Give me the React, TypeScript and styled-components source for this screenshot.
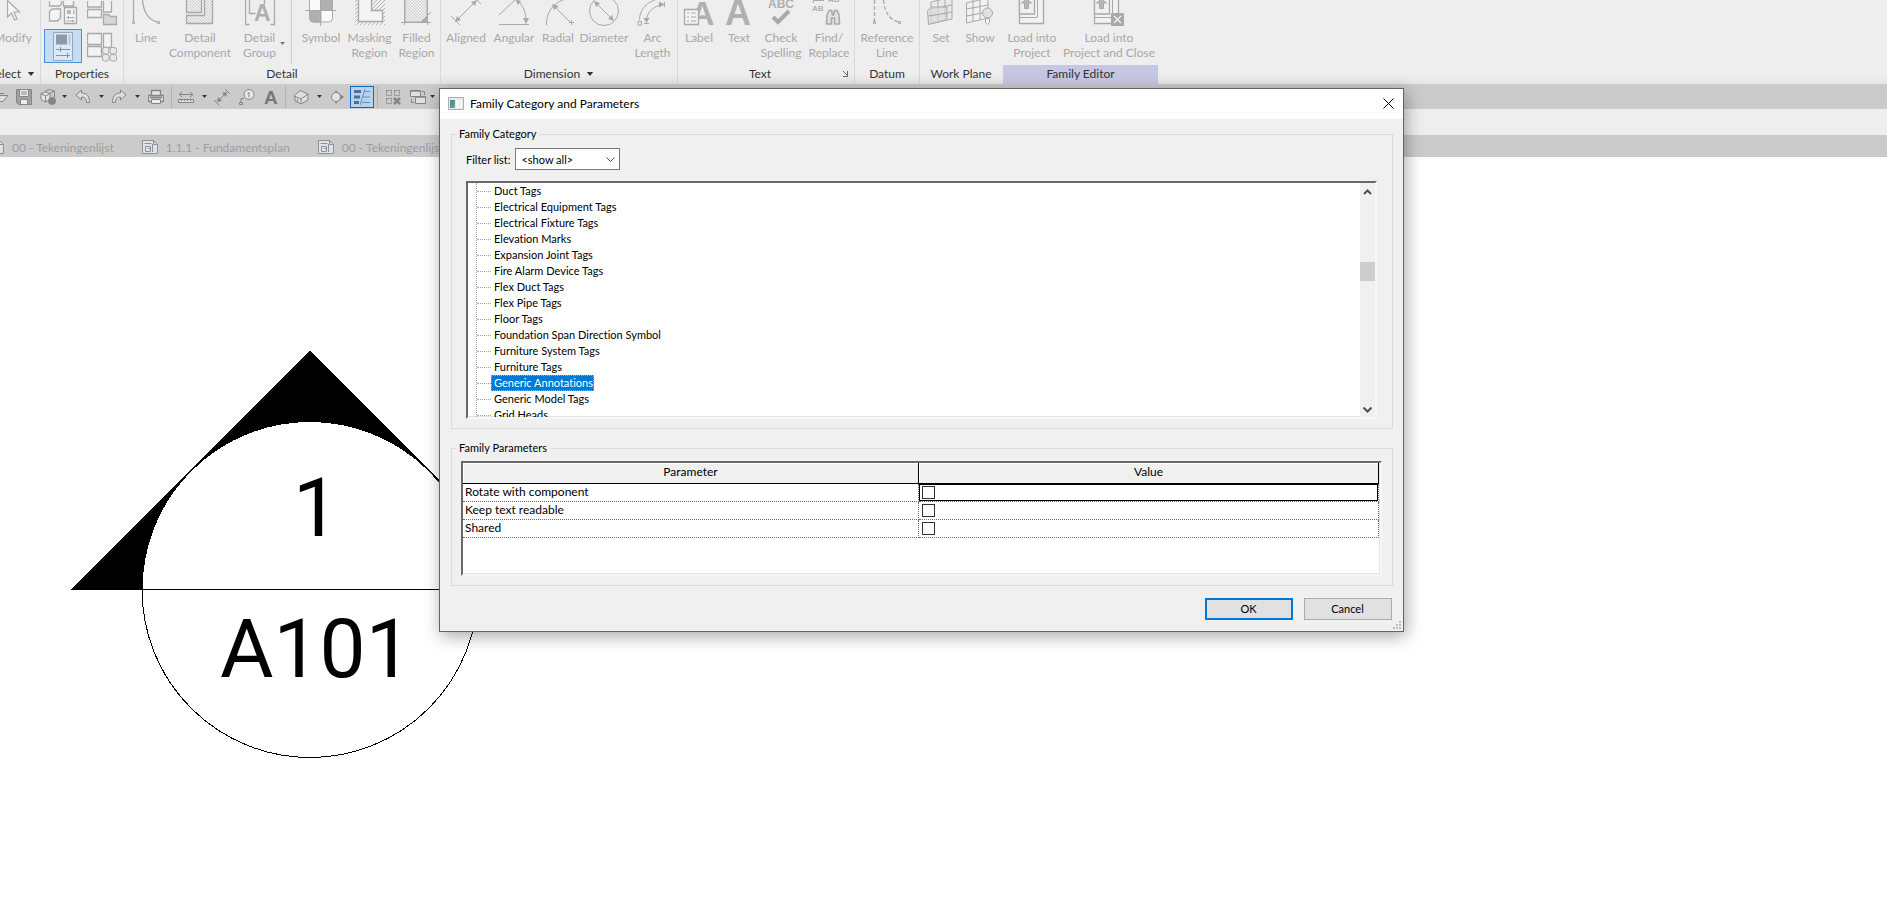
import React, { ReactNode } from 'react';
import styled, { createGlobalStyle, css } from 'styled-components';

const ui = '"Lato", "Liberation Sans", sans-serif';
const line = '#a9a9a9';
const dark = '#858585';

const GlobalStyle = createGlobalStyle`
  *, *::before, *::after { box-sizing: border-box; }
  html, body { margin: 0; padding: 0; }
  body { font-family: ${ui}; font-size: 12px; font-variant-ligatures: none; background: #fff; overflow: hidden; }
  button, select, input { font: inherit; color: inherit; margin: 0; }
  svg { display: block; flex: none; }
`;

const Page = styled.div`
  position: relative;
  min-height: 100vh;
  display: flex;
  flex-direction: column;
`;

/* ---------- ribbon ---------- */

const Ribbon = styled.header`
  display: flex;
  background: linear-gradient(#eee 75px, #e6e6e6);
`;

const Panel = styled.section<{ $width: number; $last?: boolean }>`
  width: ${p => p.$width}px;
  flex: none;
  display: flex;
  flex-direction: column;
  overflow: hidden;
  border-right: 1px solid ${p => (p.$last ? 'transparent' : '#d9d9d9')};
`;

const Tools = styled.div<{ $end?: boolean }>`
  display: flex;
  height: 65px;
  justify-content: ${p => (p.$end ? 'flex-end' : 'flex-start')};
`;

const PanelTitle = styled.h2<{ $accent?: boolean; $end?: boolean }>`
  margin: 0;
  padding: 0 ${p => (p.$end ? 5 : 0)}px 2px;
  height: 19px;
  line-height: 16px;
  font-size: 12px;
  font-weight: 400;
  white-space: nowrap;
  color: #333;
  display: flex;
  align-items: center;
  justify-content: ${p => (p.$end ? 'flex-end' : 'center')};
  gap: 6px;
  ${p => p.$accent && css`background: #c6c7e3;`}
`;

const TitleText = styled.span<{ $grow?: boolean }>`
  ${p => p.$grow && css`flex: 1; text-align: center; padding-left: 6px;`}
`;

const PlainButton = styled.button`
  border: 0;
  padding: 0;
  background: none;
  display: flex;
  align-items: center;
  justify-content: center;
`;

const ToolButton = styled(PlainButton)<{ $width: number }>`
  width: ${p => p.$width}px;
  flex: none;
  flex-direction: column;
  justify-content: flex-start;
  color: #a8a8a8;
  line-height: 15px;
`;

const ToolLabel = styled.span`
  display: flex;
  align-items: flex-end;
  gap: 4px;
  white-space: pre;
  text-align: center;
`;

const DropSlot = styled.span`
  width: 0;
  height: 18px;
`;

const RibbonRule = styled.span`
  width: 1px;
  height: 64px;
  margin-right: 6px;
  background: #cdcdcd;
`;

const PropertyGrid = styled.div`
  display: grid;
  grid-template-columns: 38px 40px;
  grid-template-rows: 29px 34px;
  padding-left: 3px;
`;

const PropertyButton = styled(PlainButton)<{ $active?: boolean }>`
  border: 1px solid ${p => (p.$active ? '#4a90d9' : 'transparent')};
  background: ${p => (p.$active ? '#c5dcf2' : 'none')};
`;

/* ---------- quick access ---------- */

const QuickBar = styled.nav`
  display: flex;
  align-items: center;
  height: 25px;
  background: #cbcbcb;
`;

const QuickButton = styled(PlainButton)<{ $width: number; $active?: boolean }>`
  width: ${p => p.$width}px;
  height: 22px;
  flex: none;
  overflow: hidden;
  ${p => p.$active && css`border: 1px solid #1467c0; background: #b5d3f0; margin-right: 3px;`}
`;

const QuickRule = styled.span`
  width: 1px;
  height: 22px;
  background: #b3b3b3;
`;

const OptionsBar = styled.div`
  height: 26px;
  background: #eee;
`;

const TabBar = styled.nav`
  display: flex;
  align-items: center;
  height: 22px;
  padding-top: 2px;
  gap: 28px;
  background: #cbcbcb;
  overflow: hidden;
`;

const Tab = styled.a<{ $cut?: boolean }>`
  display: flex;
  align-items: center;
  gap: 8px;
  margin-left: ${p => (p.$cut ? -12 : 0)}px;
  color: #9d9d9d;
  text-decoration: none;
  white-space: nowrap;
`;

const Canvas = styled.main`
  flex: 1;
  padding: 193px 0 0 70px;
  background: #fff;
`;

/* ---------- dialog ---------- */

const Dialog = styled.div`
  position: absolute;
  left: 439px;
  top: 88px;
  width: 965px;
  border: 1px solid #646464;
  background: #f0f0f0;
  color: #000;
  font-size: 11px;
  box-shadow: 2px 4px 16px rgba(0, 0, 0, 0.35);
`;

const TitleBar = styled.div`
  display: flex;
  align-items: center;
  height: 30px;
  padding: 0 9px 2px 8px;
  gap: 6px;
  background: #fff;
  font-size: 12px;
`;

const DialogTitle = styled.h1`
  flex: 1;
  margin: 0;
  font-size: 12px;
  font-weight: 400;
`;

const DialogBody = styled.form`
  display: flex;
  flex-direction: column;
  gap: 12px;
  padding: 8px 10px 11px 11px;
`;

const Group = styled.fieldset<{ $pad: string }>`
  min-width: 0;
  margin: 0;
  padding: ${p => p.$pad};
  border: 1px solid #dcdcdc;
`;

const Legend = styled.legend<{ $indent: number }>`
  margin-left: -${p => p.$indent}px;
  padding: 0 3px 0 2px;
  line-height: 14px;
`;

const FilterRow = styled.div`
  display: flex;
  align-items: center;
  gap: 5px;
  margin-bottom: 11px;
`;

const SelectBox = styled.span`
  position: relative;
  width: 105px;
`;

const Select = styled.select`
  display: block;
  width: 100%;
  height: 22px;
  padding: 0 5px;
  appearance: none;
  border: 1px solid #7a7a7a;
  border-radius: 0;
  background: #fff;
`;

const SelectArrow = styled.span`
  position: absolute;
  right: 5px;
  top: 9px;
  pointer-events: none;
`;

const Sunken = styled.div`
  border: 2px solid;
  border-color: #696969 #f7f7f7 #f7f7f7 #696969;
  background: #fff;
  box-shadow: inset -1px -1px 0 #e3e3e3;
`;

const ListBox = styled(Sunken)`
  display: flex;
  height: 238px;
`;

const Tree = styled.ul`
  flex: 1;
  margin: 0 0 0 8px;
  padding: 0;
  list-style: none;
  overflow: hidden;
  border-left: 1px dotted #a0a0a0;
`;

const TreeItem = styled.li`
  display: flex;
  align-items: center;
  height: 16px;
  &::before {
    content: '';
    width: 14px;
    border-top: 1px dotted #a0a0a0;
  }
`;

const TreeLabel = styled.span<{ $selected?: boolean }>`
  height: 16px;
  line-height: 14px;
  padding-left: 2px;
  border: 1px dotted ${p => (p.$selected ? '#ff9a3c' : 'transparent')};
  ${p => p.$selected && css`background: #0078d7; color: #fff;`}
`;

const ScrollBar = styled.div`
  display: flex;
  flex-direction: column;
  width: 15px;
  background: #f0f0f0;
`;

const ScrollButton = styled(PlainButton)`
  height: 18px;
  &:last-child { height: 14px; }
`;

const Track = styled.div`
  flex: 1;
  padding-top: 61px;
`;

const Thumb = styled.div`
  height: 19px;
  background: #cdcdcd;
`;

const TableFrame = styled(Sunken)`
  height: 115px;
  padding-right: 1px;
`;

const Table = styled.table`
  width: 100%;
  border-spacing: 0;
  table-layout: fixed;
  font-size: 12px;
`;

const HeadCell = styled.th<{ $width?: number }>`
  ${p => p.$width && css`width: ${p.$width}px;`}
  height: 21px;
  padding: 0 0 2px;
  line-height: 16px;
  font-weight: 400;
  background: #f0f0f0;
  border-right: 1px solid #000;
  border-bottom: 1px solid #000;
  box-shadow: inset 1px 1px 0 #fff;
`;

const Cell = styled.td<{ $focus?: boolean }>`
  height: 18px;
  padding: 0 2px 2px;
  line-height: 15px;
  vertical-align: top;
  border-right: 1px dotted #6b6b6b;
  border-bottom: 1px dotted #6b6b6b;
  ${p => p.$focus && css`box-shadow: inset 0 0 0 1px #000;`}
`;

const CheckBox = styled.input`
  display: block;
  appearance: none;
  width: 13px;
  height: 13px;
  margin: 2px 0 0 1px;
  border: 1px solid #333;
  background: #fff;
`;

const Footer = styled.div`
  display: flex;
  justify-content: flex-end;
  gap: 11px;
  padding-right: 1px;
`;

const PushButton = styled.button<{ $primary?: boolean }>`
  width: 88px;
  height: 22px;
  padding: 0 1px 2px 0;
  border: ${p => (p.$primary ? '2px solid #0078d7' : '1px solid #adadad')};
  background: #e1e1e1;
`;

const Grip = styled.span`
  position: absolute;
  right: 2px;
  bottom: 2px;
`;

/* ---------- drawings ---------- */

const Glyph = ({ children, w = 34, h = 30, stroke = line }: { children: ReactNode; w?: number; h?: number; stroke?: string }) => (
  <svg width={w} height={h} viewBox={`0 0 ${w} ${h}`} fill="none" stroke={stroke} aria-hidden="true">{children}</svg>
);

const Small = ({ children, w = 16 }: { children: ReactNode; w?: number }) => (
  <Glyph w={w} h={16} stroke={dark}>{children}</Glyph>
);

const Caret = ({ color = '#333', w = 5 }: { color?: string; w?: number }) => (
  <svg width={w} height={w === 5 ? 3 : 4} viewBox="0 0 8 5" aria-hidden="true"><path d="M0 0h8L4 5z" fill={color} /></svg>
);

const Hatch = () => (
  <defs>
    <pattern id="hatch" width="3" height="3" patternUnits="userSpaceOnUse"><path d="M0 0l3 3" stroke="#bbb" strokeWidth=".7" /></pattern>
    <pattern id="hatchBack" width="4" height="4" patternUnits="userSpaceOnUse"><path d="M0 4l4-4M-1 1l2-2M3 5l2-2" stroke="#b0b0b0" strokeWidth=".9" /></pattern>
  </defs>
);

const boldA = { fontFamily: '"Liberation Sans", sans-serif', fontWeight: 700, stroke: 'none', fill: '#b0b0b0' };

const icons: Record<string, ReactNode> = {
  modify: <Glyph><path d="M11.5.5V17l4-4 3 7 2.5-1-3-7h5.500z" fill="#f6f6f6" strokeWidth="1.2" /></Glyph>,
  line: <Glyph><path d="M4.500 0v21M13.500 0c1 12 6 20 15 22" strokeWidth="1.3" /><path d="M3.500 21.500h2v2h-2zM28.500 21.500h2v2h-2z" fill="#eee" /></Glyph>,
  component: <Glyph><Hatch /><path d="M3.500-4h15v16.500h-15z" fill="url(#hatch)" strokeWidth="1.3" /><path d="M21.500-2v17.500h-18v8h26V-2" fill="url(#hatch)" strokeWidth="1.3" /></Glyph>,
  group: <Glyph><path d="M.5 0v24.500h4M29.500 0v24.500h-4M19.500 0v4M4.500 0v13.500h6" strokeWidth="1.3" /><text x="9" y="21" fontSize="23" {...boldA}>A</text></Glyph>,
  symbol: <Glyph><path d="M5.500-2h23v20a4 4 0 0 1-4 4h-15a4 4 0 0 1-4-4z" fill="#fafafa" /><path d="M5.500 10.500H17V22H9.500a4 4 0 0 1-4-4zM17-2h11.500v12.500H17z" fill="#b0b0b0" /><path d="M1 10.500h31M16.500-2v28" /></Glyph>,
  mask: <Glyph><path d="M2 0h30v25H2z" fill="url(#hatchBack)" stroke="none" /><path d="M5.500-2h13v12.500h11v11h-24z" fill="#f4f4f4" strokeWidth="1.3" /></Glyph>,
  filled: <Glyph><path d="M5-2h22v18l-6 6H5z" fill="url(#hatch)" /><path d="M4.500-2v27M27.500-2v27M1 22.500h30M20 23L31 12" /><path d="M21 22l6-6v6z" fill="#b0b0b0" /></Glyph>,
  aligned: <Glyph><path d="M7 21L27 1M2 16l9 9M23-5l9 9" /><path d="M6 22l2-6 4 4zM28 0l-2 6-4-4z" fill={line} stroke="none" /></Glyph>,
  angular: <Glyph><path d="M2 15L18 0M2 24.500h30M20 0c6 5 9 12 9 21" /><path d="M26 18h6l-3 6zM18-1l6 2-3 4z" fill={line} stroke="none" /></Glyph>,
  radial: <Glyph><path d="M5.500 25C5 13 12 3 22 0M12 5l19 19M28 22.500h5M30.500 20v5" /><path d="M11 4l7 2-5 4z" fill={line} stroke="none" /></Glyph>,
  diameter: <Glyph><circle cx="17" cy="11" r="14.500" /><path d="M8 2l18 18" /><path d="M7 1l6 2-4 4zM27 21l-6-2 4-4z" fill={line} stroke="none" /></Glyph>,
  arc: <Glyph><path d="M3.500 20C3.500 10 10 3 19 0M10.500 21c0-9 7-15.500 18-16.500M8 23.500h5M28.500 2v5" /><path d="M23 1.500l6 3-6 3zM7.500 18h6l-3 5z" fill={line} stroke="none" /><path d="M2 21.500h3.500v3.500H2z" fill="#eee" /></Glyph>,
  label: <Glyph><text x="8" y="25" fontSize="34" {...boldA}>A</text><path d="M2.500 9.500h14v15h-14z" fill="#f2f2f2" strokeWidth="1.3" /><path d="M5 13h2M5 17h2M5 21h2M9 13h5M9 17h5M9 21h5" /></Glyph>,
  text: <Glyph><text x="3" y="25" fontSize="36" {...boldA}>A</text></Glyph>,
  check: <Glyph><text x="4" y="8" fontSize="12" {...boldA}>ABC</text><path d="M9 17l5 5L25 11" strokeWidth="4" /></Glyph>,
  find: <Glyph><text x="0" y="11" fontSize="8" {...boldA}>AB</text><text x="16" y="2" fontSize="8" {...boldA}>AB</text><path d="M1.500 3V.5H12" /><path d="M15 15l2-4.500h2.500l1 4.500h1l1-4.500H25l2 4.500.5 9h-5v-6h-3v6h-5z" fill="#e2e2e2" strokeWidth="1.6" /></Glyph>,
  reference: <Glyph><path d="M4.500 0v21M13.500 0c1 12 6 20 15 22" strokeWidth="1.3" strokeDasharray="4 2" /><path d="M3.500 21.500h2v2h-2zM28.500 21.500h2v2h-2z" fill="#eee" /></Glyph>,
  set: <Glyph><path d="M7 2L28-3v22L7 23z" fill="#e9e9e9" /><path d="M14 0v21M21-2v22M7 9l21-4M7 16l21-4" /><path d="M3.500 10.500L8 7h15v13L4.500 24.500z" fill="#dcdcdc" fillOpacity=".7" /><path d="M4 16l19-3" /></Glyph>,
  show: <Glyph><path d="M3.500 3L25-2v20L3.500 23z" fill="#f2f2f2" /><path d="M10 0v22M17-1v21M3.500 9L25 5M3.500 16L25 12" /><circle cx="24.500" cy="13" r="5" fill="#e0e0e0" /><path d="M22.500 18.500h4v4l-2 2-2-2z" fill="#f4f4f4" /></Glyph>,
  load: <Glyph><path d="M4.500-2h24v25.500h-24z" fill="#f2f2f2" strokeWidth="1.3" /><path d="M4.500 17.500h18V0" /><path d="M4.500-2h15v16h-15z" fill="#f0f0f0" strokeWidth="1.3" /><path d="M9.500 8.500V3h-3l5-4 5 4h-3v5.500z" fill="#b8b8b8" /></Glyph>,
  loadClose: <Glyph><path d="M2.500-2h24v25.500h-24z" fill="#f2f2f2" strokeWidth="1.3" /><path d="M2.500 17.500h18V0" /><path d="M2.500-2h15v16h-15z" fill="#f0f0f0" strokeWidth="1.3" /><path d="M7.500 8.500V3h-3l5-4 5 4h-3v5.500z" fill="#b8b8b8" /><path d="M19.500 13.500h12v12h-12z" fill="#a8a8a8" /><path d="M22 16l7 7M29 16l-7 7" stroke="#f4f4f4" strokeWidth="1.3" /></Glyph>,
};

const FamilyTypes = () => (
  <Glyph w={30} h={27}>
    <path d="M1.500-2h12v5l-2 2h-10zM15.500-2h10v7h-10zM1.500 10l3-2h8v9l-3 3h-8z" fill="#f4f4f4" strokeWidth="1.3" />
    <path d="M16.500 6.500h12v16h-12z" fill="#f4f4f4" strokeWidth="1.3" />
    <path d="M19 9h4v4h-4zM25 9h1.500v4H25z" fill="#b5b5b5" stroke="none" /><path d="M18.500 16.500h8M18.500 20h8M20.500 15v3M24.500 18.500v3" />
  </Glyph>
);

const FamilyCategory = () => (
  <Glyph w={30} h={27}>
    <path d="M.5-2h14v8H.5zM16.500-2h8v13h-8zM.5 8.500h14v8H.5z" fill="#f2f2f2" strokeWidth="1.3" />
    <path d="M16.500 23.500v-10h5l2 2h6v8z" fill="#d6d6d6" strokeWidth="1.3" />
  </Glyph>
);

const PropertiesIcon = () => (
  <Glyph w={22} h={31} stroke="#8fa9c2">
    <path d="M1.500 1.500h19v28h-19z" fill="#dce8f3" />
    <path d="M4 3.500h11v10H4z" fill="#8b9aa8" stroke="none" /><path d="M16.500 3.500h2v10h-2z" fill="#b9c6d2" stroke="none" />
    <path d="M4 18.500h14M4 24.500h14M8.500 16v5M15.500 22v5" stroke="#7f95aa" />
  </Glyph>
);

const TypesGrid = () => (
  <Glyph w={30} h={31}>
    <path d="M.5 2.500h14v11H.5zM16.500 2.500h8v14h-8zM.5 15.500h14v10H.5z" fill="#f2f2f2" strokeWidth="1.3" />
    <rect x="15.500" y="16.500" width="6.500" height="6.500" rx="2" fill="#e8e8e8" /><rect x="23" y="16.500" width="6.500" height="6.500" rx="2" fill="#e8e8e8" />
    <rect x="15.500" y="23.500" width="6.500" height="6.500" rx="2" fill="#e8e8e8" /><rect x="23" y="23.500" width="6.500" height="6.500" rx="2" fill="#e8e8e8" />
  </Glyph>
);

const SheetIcon = () => (
  <Glyph w={16} h={14} stroke="#8b9299">
    <path d="M.5.5h11l4 4v9H.5z" fill="#dfe2e5" /><path d="M11.500.5v4h4M2.500 3.500h7M3.500 11.500v-5h5v5zM6 8.500h2.500" /><path d="M10.500 4v8" />
  </Glyph>
);

type ToolSpec = { icon: string; label: string; w: number; drop?: boolean; rule?: boolean };
type PanelSpec = { title: string; w: number; tools: ToolSpec[]; drop?: boolean; launcher?: boolean; accent?: boolean; last?: boolean; cut?: boolean };

const selectPanel: PanelSpec = { title: 'Select', w: 41, cut: true, drop: true, tools: [{ icon: 'modify', label: 'Modify', w: 54 }] };

const panels: PanelSpec[] = [
  { title: 'Detail', w: 317, tools: [
    { icon: 'line', label: 'Line', w: 44 },
    { icon: 'component', label: 'Detail\nComponent', w: 64 },
    { icon: 'group', label: 'Detail\nGroup', w: 59, drop: true, rule: true },
    { icon: 'symbol', label: 'Symbol', w: 46 },
    { icon: 'mask', label: 'Masking\nRegion', w: 51 },
    { icon: 'filled', label: 'Filled\nRegion', w: 43 },
  ] },
  { title: 'Dimension', w: 237, drop: true, tools: [
    { icon: 'aligned', label: 'Aligned', w: 50 },
    { icon: 'angular', label: 'Angular', w: 46 },
    { icon: 'radial', label: 'Radial', w: 42 },
    { icon: 'diameter', label: 'Diameter', w: 50 },
    { icon: 'arc', label: 'Arc\nLength', w: 47 },
  ] },
  { title: 'Text', w: 177, launcher: true, tools: [
    { icon: 'label', label: 'Label', w: 42 },
    { icon: 'text', label: 'Text', w: 38 },
    { icon: 'check', label: 'Check\nSpelling', w: 46 },
    { icon: 'find', label: 'Find/\nReplace', w: 50 },
  ] },
  { title: 'Datum', w: 65, tools: [{ icon: 'reference', label: 'Reference\nLine', w: 64 }] },
  { title: 'Work Plane', w: 83, last: true, tools: [
    { icon: 'set', label: 'Set', w: 42 },
    { icon: 'show', label: 'Show', w: 36 },
  ] },
  { title: 'Family Editor', w: 156, accent: true, last: true, tools: [
    { icon: 'load', label: 'Load into\nProject', w: 58 },
    { icon: 'loadClose', label: 'Load into\nProject and Close', w: 96 },
  ] },
];

const RibbonPanel = ({ spec }: { spec: PanelSpec }) => (
  <Panel $width={spec.w} $last={spec.last}>
    <Tools $end={spec.cut}>
      {spec.tools.map(t => (
        <React.Fragment key={t.label}>
          <ToolButton type="button" $width={t.w}>
            {icons[t.icon]}
            <ToolLabel>{t.label}{t.drop && <DropSlot><Caret color="#777" /></DropSlot>}</ToolLabel>
          </ToolButton>
          {t.rule && <RibbonRule />}
        </React.Fragment>
      ))}
    </Tools>
    <PanelTitle $accent={spec.accent} $end={spec.cut}>
      <TitleText $grow={spec.launcher}>{spec.title}</TitleText>
      {spec.drop && <Caret w={8} />}
      {spec.launcher && (
        <PlainButton type="button" aria-label="Text settings">
          <svg width="12" height="6" viewBox="0 0 12 6" fill="none" stroke="#666"><path d="M1 0l4 4M5.500 0v5.500H1" /></svg>
        </PlainButton>
      )}
    </PanelTitle>
  </Panel>
);

type QuickSpec = { name: string; w: number; icon?: ReactNode; active?: boolean; rule?: boolean };
const quick: QuickSpec[] = [
  { name: 'Open', w: 12, icon: <Small w={12}><path d="M0 4.500h4M0 12.500h3l5-6H0" fill="#ddd" /></Small> },
  { name: 'Save', w: 24, icon: <Small><path d="M.5.5h15v15h-13l-2-2z" fill="#a2a2a2" /><path d="M3.500.5h9v7h-9zM4.500 10.500h7v5h-7z" fill="#eee" /><path d="M5 3h6M5 5h6" /></Small> },
  { name: 'Synchronize', w: 24, icon: <Small><path d="M1 4.500L5.500 3 10 4.500v6L5.500 13 1 10.500z" fill="#e4e4e4" /><path d="M1 4.500L5.500 7 10 4.500M5.500 7v6M5.500 3V2l4-1.500L14.500 2v7M10 4.500l4.500-2.500" /><circle cx="12" cy="12" r="3.5" fill="#858585" /></Small> },
  { name: 'Synchronize options', w: 9 },
  { name: 'Undo', w: 28, icon: <Small><path d="M1 6l5.500-5v3c5 0 8 3 8 9.500h-3c0-4-1.500-5.500-5-5.500v3z" fill="#dedede" /></Small> },
  { name: 'Undo list', w: 8 },
  { name: 'Redo', w: 28, icon: <Small><path d="M15 6L9.500 1v3c-5 0-8 3-8 9.500h3c0-4 1.500-5.500 5-5.500v3z" fill="#dedede" /></Small> },
  { name: 'Redo list', w: 8 },
  { name: 'Print', w: 30, icon: <Small><path d="M3.500 6V1.500h9V6M.5 6.500h15v6H.5z" fill="#e6e6e6" strokeWidth="1.3" /><path d="M3.500 10.500h9v4h-9z" fill="#eee" /><path d="M2 8.500h12" strokeWidth="2" /></Small>, rule: true },
  { name: 'Measure', w: 28, icon: <Small><path d="M1 5.500h14M4 3L1 5.500 4 8M12 3l3 2.500L12 8" /><path d="M.5 10.500h15v3H.5z" fill="#ddd" /><path d="M3.500 10v2M6.500 10v2M9.500 10v2M12.500 10v2" /></Small> },
  { name: 'Measure options', w: 8 },
  { name: 'Aligned dimension', w: 28, icon: <Small><path d="M4 12l8-8M0 11l5 5M11 0l5 5" /><path d="M3 13l1-5 4 4zM13 3l-1 5-4-4z" fill={dark} stroke="none" /></Small> },
  { name: 'Tag', w: 22, icon: <Small><circle cx="10" cy="5.500" r="5" fill="#e6e6e6" /><path d="M8.500 4.500l1.500-1v5M5 9.500H2V14M.5 13.500h3v2h-3z" /></Small> },
  { name: 'Text', w: 27, icon: <Small><text x="0" y="15" fontSize="19" {...boldA} fill="#777">A</text></Small>, rule: true },
  { name: 'Default 3D view', w: 29, icon: <Small><path d="M1 7l6-5.500L15 5v6l-7 4-6-3V8z" fill="#dedede" /><path d="M1 7l7 3 7-5M8 10v5M4.500 10v3" /></Small> },
  { name: 'View options', w: 8 },
  { name: 'Section', w: 27, icon: <Small><path d="M7 2l8 6-8 6z" fill="#888" stroke="none" /><circle cx="7" cy="8" r="4.500" fill="#e4e4e4" /><path d="M7 1v3M7 12v3" /></Small> },
  { name: 'Thin lines', w: 24, active: true, icon: <Small><path d="M0 2.500h7M0 8h6M0 13.500h5" stroke="#4f6f8f" strokeWidth="3" /><path d="M10 2.500h6M9 8h7M8 13.500h8M11 0L6 16" stroke="#6b8fb0" /></Small>, rule: true },
  { name: 'Close inactive views', w: 30, icon: <Small><path d="M1.500 1.500h5v5h-5zM9.500 1.500h5v5h-5zM1.500 9.500h5v5h-5z" strokeDasharray="2 1" /><path d="M9 9l6 6M15 9l-6 6" strokeWidth="2.5" /></Small> },
  { name: 'Switch windows', w: 20, icon: <Small><path d="M.5 1.500h10v6H.5zM5.500 7.500h10v7h-10z" fill="#e0e0e0" /><path d="M.5 2h10M5.500 8h10" strokeWidth="1.5" /><path d="M12 2.500h2.500V6M1.500 10v3.500H4" /></Small> },
  { name: 'Window list', w: 8 },
];

const tags = [
  'Duct Tags', 'Electrical Equipment Tags', 'Electrical Fixture Tags', 'Elevation Marks', 'Expansion Joint Tags',
  'Fire Alarm Device Tags', 'Flex Duct Tags', 'Flex Pipe Tags', 'Floor Tags', 'Foundation Span Direction Symbol',
  'Furniture System Tags', 'Furniture Tags', 'Generic Annotations', 'Generic Model Tags', 'Grid Heads',
];

const parameters = ['Rotate with component', 'Keep text readable', 'Shared'];

const SectionHead = () => (
  <svg width="480" height="410" viewBox="70 350 480 410" role="img" aria-label="Section head symbol">
    <g shapeRendering="crispEdges">
      <path d="M71 589.500L310 351l239 238.500z" fill="#000" />
      <circle cx="310" cy="589.500" r="168" fill="#fff" stroke="#000" />
      <path d="M71 589.500h478" stroke="#000" />
    </g>
    <g fontFamily='"Roboto", "Liberation Sans", sans-serif' fontSize="82">
      <text x="293" y="536">1</text>
      <text x="220" y="677">A101</text>
    </g>
  </svg>
);

const Chevron = ({ up, thick }: { up?: boolean; thick?: boolean }) => (
  <svg width="9" height="6" viewBox="0 0 9 6" fill="none" stroke="#505050" strokeWidth={thick ? 2 : 1}>
    <path d={up ? 'M1 5l3.500-3.500L8 5' : 'M.5.5l4 4 4-4'} />
  </svg>
);

const FamilyDialog = () => (
  <Dialog role="dialog" aria-labelledby="dialog-title">
    <TitleBar>
      <svg width="16" height="13" viewBox="0 0 16 13" aria-hidden="true">
        <defs><linearGradient id="pane" x2="1" y2="1"><stop stopColor="#4b7fa8" /><stop offset="1" stopColor="#5fae7b" /></linearGradient></defs>
        <path d="M.5.5h15v12H.5z" fill="#e8eaec" stroke="#a8adb2" /><path d="M2 3h5v8H2z" fill="url(#pane)" /><path d="M8 3h3v8H8zM12 3h2v8h-2z" fill="#f7f7f7" />
      </svg>
      <DialogTitle id="dialog-title">Family Category and Parameters</DialogTitle>
      <PlainButton type="button" aria-label="Close">
        <svg width="11" height="11" viewBox="0 0 11 11" stroke="#000"><path d="M.5.5l10 10M10.500.5l-10 10" /></svg>
      </PlainButton>
    </TitleBar>
    <DialogBody onSubmit={e => e.preventDefault()}>
      <Group $pad="7px 15px 9px 14px">
        <Legend $indent={9}>Family Category</Legend>
        <FilterRow>
          <label htmlFor="filter">Filter list:</label>
          <SelectBox>
            <Select id="filter" defaultValue="all"><option value="all">&lt;show all&gt;</option></Select>
            <SelectArrow><Chevron /></SelectArrow>
          </SelectBox>
        </FilterRow>
        <ListBox>
          <Tree>
            {tags.map(t => (
              <TreeItem key={t}><TreeLabel $selected={t === 'Generic Annotations'}>{t}</TreeLabel></TreeItem>
            ))}
          </Tree>
          <ScrollBar>
            <ScrollButton type="button" aria-label="Scroll up"><Chevron up thick /></ScrollButton>
            <Track><Thumb /></Track>
            <ScrollButton type="button" aria-label="Scroll down"><Chevron thick /></ScrollButton>
          </ScrollBar>
        </ListBox>
      </Group>
      <Group $pad="6px 10px 9px 9px">
        <Legend $indent={4}>Family Parameters</Legend>
        <TableFrame>
          <Table>
            <thead><tr><HeadCell $width={456}>Parameter</HeadCell><HeadCell>Value</HeadCell></tr></thead>
            <tbody>
              {parameters.map((p, i) => (
                <tr key={p}>
                  <Cell><label htmlFor={`param-${i}`}>{p}</label></Cell>
                  <Cell $focus={i === 0}><CheckBox id={`param-${i}`} type="checkbox" /></Cell>
                </tr>
              ))}
            </tbody>
          </Table>
        </TableFrame>
      </Group>
      <Footer>
        <PushButton type="submit" $primary>OK</PushButton>
        <PushButton type="button">Cancel</PushButton>
      </Footer>
    </DialogBody>
    <Grip>
      <svg width="8" height="8" viewBox="0 0 8 8" fill="#bfbfbf"><path d="M6 0h2v2H6zM3 3h2v2H3zM6 3h2v2H6zM0 6h2v2H0zM3 6h2v2H3zM6 6h2v2H6z" /></svg>
    </Grip>
  </Dialog>
);

export default function App() {
  return (
    <Page>
      <GlobalStyle />
      <Ribbon>
        <RibbonPanel spec={selectPanel} />
        <Panel $width={83}>
          <Tools>
            <PropertyGrid>
              <PropertyButton type="button" aria-label="Family types"><FamilyTypes /></PropertyButton>
              <PropertyButton type="button" aria-label="Family category"><FamilyCategory /></PropertyButton>
              <PropertyButton type="button" aria-label="Properties" $active><PropertiesIcon /></PropertyButton>
              <PropertyButton type="button" aria-label="Type properties"><TypesGrid /></PropertyButton>
            </PropertyGrid>
          </Tools>
          <PanelTitle>Properties</PanelTitle>
        </Panel>
        {panels.map(p => <RibbonPanel key={p.title} spec={p} />)}
      </Ribbon>
      <QuickBar aria-label="Quick access">
        {quick.map(q => (
          <React.Fragment key={q.name}>
            <QuickButton type="button" aria-label={q.name} $width={q.w} $active={q.active}>{q.icon ?? <Caret />}</QuickButton>
            {q.rule && <QuickRule />}
          </React.Fragment>
        ))}
      </QuickBar>
      <OptionsBar />
      <TabBar aria-label="Open views">
        <Tab href="#view-1" $cut><SheetIcon />00 - Tekeningenlijst</Tab>
        <Tab href="#view-2"><SheetIcon />1.1.1 - Fundamentsplan</Tab>
        <Tab href="#view-3"><SheetIcon />00 - Tekeningenlijst</Tab>
      </TabBar>
      <Canvas><SectionHead /></Canvas>
      <FamilyDialog />
    </Page>
  );
}
